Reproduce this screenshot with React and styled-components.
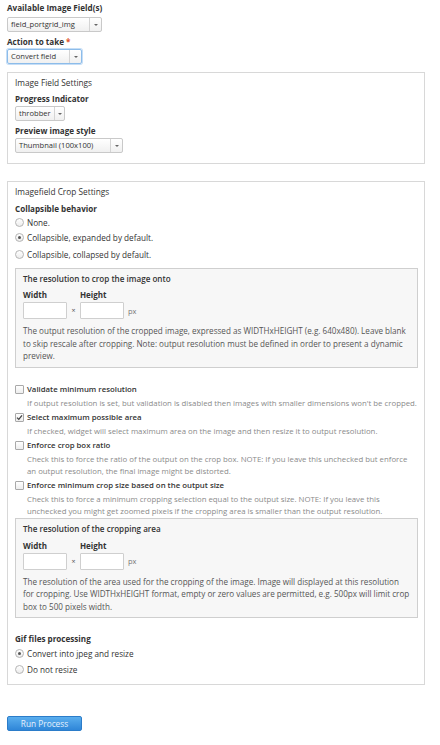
import React from "react";
import styled, { createGlobalStyle, css } from "styled-components";

const GlobalStyle = createGlobalStyle`
  html, body { margin: 0; padding: 0; background: #fff; }
  body {
    font-family: "Open Sans", "Noto Sans", sans-serif;
    font-size: 8px;
    color: #333;
    -webkit-font-smoothing: antialiased;
  }
  * { box-sizing: border-box; }
`;

const Page = styled.div`
  width: 425px;
  padding: 2px 0 14px 7px;
`;

const FieldLabel = styled.div`
  font-weight: 700;
  font-size: 8.1px;
  line-height: 12px;
  color: #333;
  margin-top: ${(p) => p.$mt || 0}px;
  margin-bottom: ${(p) => p.$mb || 0}px;
`;

const Required = styled.span`
  color: #e0542b;
  margin-left: 2px;
`;

const SelectBox = styled.div`
  display: flex;
  align-items: stretch;
  width: ${(p) => p.$w}px;
  height: 15px;
  border: 1px solid #c9c9c9;
  border-radius: 2px;
  background: linear-gradient(#ffffff, #f0f0f0);
  ${(p) =>
    p.$focus &&
    css`
      border-color: #8cbcea;
      box-shadow: 0 0 0 1px #c6def6;
    `}
`;

const SelectText = styled.span`
  flex: 1;
  padding-left: 3px;
  font-size: 7.6px;
  line-height: 13px;
  color: #333;
  white-space: nowrap;
  overflow: hidden;
`;

const SelectArrow = styled.span`
  width: ${(p) => p.$w || 12}px;
  border-left: 1px solid #d4d4d4;
  display: flex;
  align-items: center;
  justify-content: center;
  &::after {
    content: "";
    border-left: 2px solid transparent;
    border-right: 2px solid transparent;
    border-top: 2px solid #666;
  }
`;

const Fieldset = styled.section`
  border: 1px solid #d8d8d8;
  margin-top: ${(p) => p.$mt || 0}px;
  padding: 4px 6px ${(p) => p.$pb || 10}px 7px;
`;

const Legend = styled.div`
  font-size: 8.3px;
  line-height: 12px;
  color: #333;
  margin-bottom: ${(p) => p.$mb || 4}px;
`;

const OptionRow = styled.label`
  display: flex;
  align-items: center;
  gap: 3px;
  height: ${(p) => p.$h || 16}px;
  font-size: ${(p) => (p.$bold ? 7.8 : 8.2)}px;
  color: #333;
  font-weight: ${(p) => (p.$bold ? 600 : 400)};
`;

const Radio = styled.span`
  width: 9px;
  height: 9px;
  border-radius: 50%;
  border: 1px solid #b5b5b5;
  background: linear-gradient(#ffffff, #ececec);
  display: flex;
  align-items: center;
  justify-content: center;
  ${(p) =>
    p.$on &&
    css`
      &::after {
        content: "";
        width: 3px;
        height: 3px;
        border-radius: 50%;
        background: #555;
      }
    `}
`;

const Checkbox = styled.span`
  width: 9px;
  height: 9px;
  border-radius: 1px;
  border: 1px solid #a9a9a9;
  background: linear-gradient(#ffffff, #ededed);
  display: flex;
  align-items: center;
  justify-content: center;
`;

const Description = styled.div`
  font-size: ${(p) => (p.$dark ? 8.1 : 7.8)}px;
  line-height: ${(p) => (p.$dark ? 12.5 : 12)}px;
  color: ${(p) => (p.$dark ? "#555" : "#8a8a8a")};
  padding-left: ${(p) => p.$indent || 0}px;
  margin-bottom: ${(p) => p.$mb || 0}px;
`;

const InnerBox = styled.div`
  background: #f7f7f7;
  border: 1px solid #cfcfcf;
  padding: 4px 7px 4px 7px;
  margin-top: ${(p) => p.$mt || 0}px;
`;

const InnerTitle = styled.div`
  font-size: 8.1px;
  font-weight: 600;
  line-height: 12px;
  color: #333;
`;

const DimGrid = styled.div`
  display: grid;
  grid-template-columns: 44px 13px 44px auto;
  grid-template-rows: 11px 17px;
  row-gap: 2px;
  align-items: center;
  margin-top: ${(p) => p.$mt}px;
  margin-bottom: 6px;
`;

const DimLabel = styled.div`
  font-size: 8px;
  font-weight: 700;
  line-height: 11px;
  color: #333;
  grid-column: ${(p) => p.$col};
`;

const TextInput = styled.div`
  height: 17px;
  background: #fff;
  border: 1px solid #cfcfcf;
  border-radius: 1px;
`;

const Times = styled.span`
  text-align: center;
  font-size: 7px;
  color: #555;
`;

const Unit = styled.span`
  padding-left: 4px;
  font-size: 7.5px;
  color: #777;
`;

const Spacer = styled.div`
  height: ${(p) => p.$h}px;
`;

const Button = styled.button`
  display: block;
  margin-top: 31px;
  width: 75px;
  height: 15px;
  padding: 0;
  border: 1px solid #2b7cc9;
  border-radius: 2px;
  background: linear-gradient(#5aaeee, #2f86d8);
  color: #e6f1fd;
  font-family: "Open Sans", "Noto Sans", sans-serif;
  font-size: 8.3px;
  line-height: 13px;
  cursor: pointer;
`;

const Select = ({ w, arrow, focus, children }) => (
  <SelectBox $w={w} $focus={focus}>
    <SelectText>{children}</SelectText>
    <SelectArrow $w={arrow} />
  </SelectBox>
);

const CheckMark = () => (
  <svg width="7" height="7" viewBox="0 0 7 7">
    <path d="M1 3.6 L2.8 5.4 L6 1.4" fill="none" stroke="#444" strokeWidth="1.3" />
  </svg>
);

const CheckOption = ({ checked, label, children }) => (
  <>
    <OptionRow $h={15} $bold>
      <Checkbox>{checked && <CheckMark />}</Checkbox>
      <span>{label}</span>
    </OptionRow>
    <Description $indent={12} $mb={1}>
      {children}
    </Description>
  </>
);

const Dimensions = ({ mt }) => (
  <DimGrid $mt={mt}>
    <DimLabel $col="1">Width</DimLabel>
    <DimLabel $col="3">Height</DimLabel>
    <span />
    <TextInput />
    <Times>×</Times>
    <TextInput />
    <Unit>px</Unit>
  </DimGrid>
);

export default function App() {
  return (
    <>
      <GlobalStyle />
      <Page>
        <FieldLabel $mb={3}>Available Image Field(s)</FieldLabel>
        <Select w={95}>field_portgrid_img</Select>
        <FieldLabel $mt={4} $mb={1}>
          Action to take<Required>*</Required>
        </FieldLabel>
        <Select w={75} focus>
          Convert field
        </Select>

        <Fieldset $mt={8} $pb={10}>
          <Legend>Image Field Settings</Legend>
          <FieldLabel $mb={1}>Progress Indicator</FieldLabel>
          <Select w={50} arrow={10}>
            throbber
          </Select>
          <FieldLabel $mt={4} $mb={1}>
            Preview image style
          </FieldLabel>
          <Select w={108}>Thumbnail (100x100)</Select>
        </Fieldset>

        <Fieldset $mt={17} $pb={7}>
          <Legend $mb={5}>Imagefield Crop Settings</Legend>
          <FieldLabel>Collapsible behavior</FieldLabel>
          <OptionRow $h={14}>
            <Radio />
            <span>None.</span>
          </OptionRow>
          <OptionRow $h={17}>
            <Radio $on />
            <span>Collapsible, expanded by default.</span>
          </OptionRow>
          <OptionRow $h={17}>
            <Radio />
            <span>Collapsible, collapsed by default.</span>
          </OptionRow>

          <InnerBox $mt={5}>
            <InnerTitle>The resolution to crop the image onto</InnerTitle>
            <Dimensions mt={4} />
            <Description $dark>
              The output resolution of the cropped image, expressed as WIDTHxHEIGHT (e.g.
              640x480). Leave blank to skip rescale after cropping. Note: output resolution
              must be defined in order to present a dynamic preview.
            </Description>
          </InnerBox>

          <Spacer $h={14} />
          <CheckOption label="Validate minimum resolution">
            If output resolution is set, but validation is disabled then images with smaller
            dimensions won't be cropped.
          </CheckOption>
          <CheckOption checked label="Select maximum possible area">
            If checked, widget will select maximum area on the image and then resize it to
            output resolution.
          </CheckOption>
          <CheckOption label="Enforce crop box ratio">
            Check this to force the ratio of the output on the crop box. NOTE: If you leave
            this unchecked but enforce an output resolution, the final image might be
            distorted.
          </CheckOption>
          <CheckOption label="Enforce minimum crop size based on the output size">
            Check this to force a minimum cropping selection equal to the output size. NOTE:
            If you leave this unchecked you might get zoomed pixels if the cropping area is
            smaller than the output resolution.
          </CheckOption>

          <InnerBox $mt={1}>
            <InnerTitle>The resolution of the cropping area</InnerTitle>
            <Dimensions mt={5} />
            <Description $dark>
              The resolution of the area used for the cropping of the image. Image will
              displayed at this resolution for cropping. Use WIDTHxHEIGHT format, empty or
              zero values are permitted, e.g. 500px will limit crop box to 500 pixels width.
            </Description>
          </InnerBox>

          <FieldLabel $mt={15}>Gif files processing</FieldLabel>
          <OptionRow $h={16}>
            <Radio $on />
            <span>Convert into jpeg and resize</span>
          </OptionRow>
          <OptionRow $h={16}>
            <Radio />
            <span>Do not resize</span>
          </OptionRow>
        </Fieldset>

        <Button>Run Process</Button>
      </Page>
    </>
  );
}
